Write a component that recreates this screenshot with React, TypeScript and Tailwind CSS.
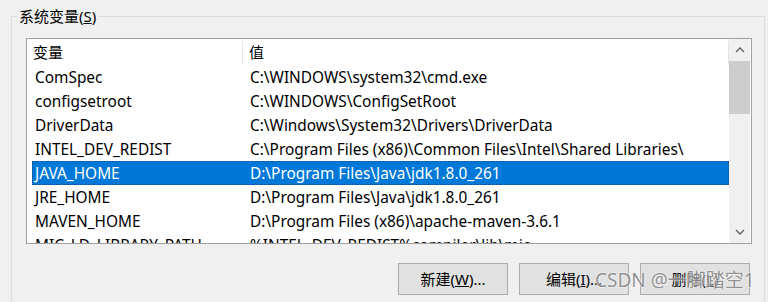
import React from "react";

const rows: [string, string][] = [
  ["ComSpec", "C:\\WINDOWS\\system32\\cmd.exe"],
  ["configsetroot", "C:\\WINDOWS\\ConfigSetRoot"],
  ["DriverData", "C:\\Windows\\System32\\Drivers\\DriverData"],
  ["INTEL_DEV_REDIST", "C:\\Program Files (x86)\\Common Files\\Intel\\Shared Libraries\\"],
  ["JAVA_HOME", "D:\\Program Files\\Java\\jdk1.8.0_261"],
  ["JRE_HOME", "D:\\Program Files\\Java\\jdk1.8.0_261"],
  ["MAVEN_HOME", "D:\\Program Files (x86)\\apache-maven-3.6.1"],
  ["MIC_LD_LIBRARY_PATH", "%INTEL_DEV_REDIST%compiler\\lib\\mic"],
];

const font = {
  fontFamily: '"Noto Sans", "Noto Sans CJK SC", sans-serif',
};

function Btn({ label, u, tail }: { label: string; u: string; tail: string }) {
  return (
    <div className="w-[110px] h-[32px] bg-[#e1e1e1] border border-[#adadad] flex items-center justify-center text-[15px] text-black">
      <span>
        {label}(<span className="underline">{u}</span>){tail}
      </span>
    </div>
  );
}

export default function App() {
  return (
    <div
      className="w-[768px] h-[302px] bg-[#f0f0f0] relative overflow-hidden text-black"
      style={font}
    >
      <div className="pt-[16px] pl-[11px]">
        <div className="relative w-[754px] h-[300px] border-l border-t border-r border-[#dcdcdc]">
          <div className="absolute left-[5px] top-[-11px] px-[2px] bg-[#f0f0f0] text-[15px] leading-[20px]">
            系统变量(<span className="underline">S</span>)
          </div>
          <div className="ml-[14px] mt-[21px] w-[726px] h-[206px] border border-[#a0a0a0] bg-white flex overflow-hidden">
            <div className="flex-1 flex flex-col min-w-0">
              <div className="h-[26px] flex text-[15px] shrink-0">
                <div className="w-[216px] pl-[6px] pt-[1px] flex items-center relative">
                  变量
                  <div className="absolute right-0 top-[2px] h-[24px] w-px bg-[#e5e5e5]" />
                </div>
                <div className="flex-1 pl-[6px] pt-[1px] flex items-center relative">
                  值
                  <div className="absolute right-0 top-[2px] h-[24px] w-px bg-[#e5e5e5]" />
                </div>
              </div>
              {rows.map(([k, v], i) => {
                const sel = i === 4;
                return (
                  <div
                    key={k}
                    className={
                      "h-[24px] shrink-0 flex text-[15.4px] leading-[22px] pt-[1px] ml-[5px] whitespace-nowrap " +
                      (sel
                        ? "bg-[#0078d7] text-white border border-dotted border-[#1c4f8a]"
                        : "border border-transparent")
                    }
                  >
                    <div className="w-[210px] pl-[2px]">{k}</div>
                    <div className="flex-1 pl-[7px]">{v}</div>
                  </div>
                );
              })}
            </div>
            <div className="w-[21px] shrink-0 bg-[#f0f0f0] flex flex-col mr-[1px]">
              <div className="h-[22px] flex items-center justify-center">
                <svg width="10" height="6" viewBox="0 0 10 6">
                  <path d="M1 5 L5 1 L9 5" stroke="#606060" strokeWidth="1.4" fill="none" />
                </svg>
              </div>
              <div className="h-[53px] bg-[#cdcdcd]" />
              <div className="flex-1" />
              <div className="h-[22px] flex items-center justify-center">
                <svg width="10" height="6" viewBox="0 0 10 6">
                  <path d="M1 1 L5 5 L9 1" stroke="#606060" strokeWidth="1.4" fill="none" />
                </svg>
              </div>
            </div>
          </div>
          <div className="mt-[19px] ml-[386px] flex gap-[11px]">
            <Btn label="新建" u="W" tail="..." />
            <Btn label="编辑" u="I" tail="..." />
            <Btn label="删除" u="L" tail="" />
          </div>
        </div>
      </div>
      <div
        className="absolute left-[595px] top-[266px] text-[19px] text-[#8a8a8a] opacity-90 whitespace-nowrap"
        style={{ textShadow: "0 0 2px #fff, 0 0 2px #fff" }}
      >
        CSDN @一脚踏空1
      </div>
    </div>
  );
}
